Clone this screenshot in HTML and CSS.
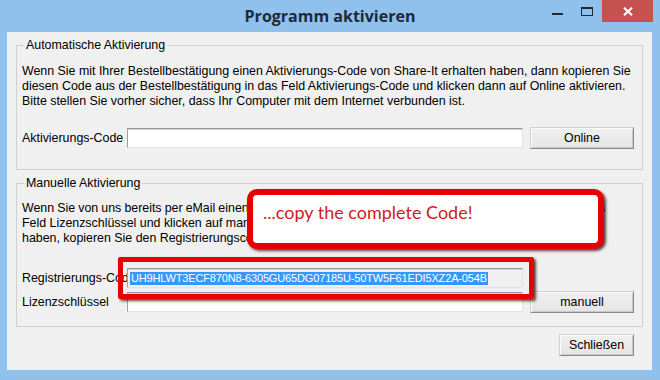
FILE: index.html
```html
<!DOCTYPE html>
<html lang="de">
<head>
<meta charset="utf-8">
<title>Programm aktivieren</title>
<link rel="stylesheet" href="styles.css">
</head>
<body>
<div class="window">
  <div class="titlebar">
    <div class="tb-left"></div>
    <div class="title">Programm aktivieren</div>
    <div class="controls">
      <span class="ctl-min"></span>
      <span class="ctl-max"></span>
      <span class="ctl-close">
        <svg width="10" height="9" viewBox="0 0 10 9"><path d="M1 0.8 L9 8.2 M9 0.8 L1 8.2" stroke="#fff" stroke-width="2.2" fill="none"/></svg>
      </span>
    </div>
  </div>
  <div class="client">
    <fieldset class="group g1">
      <legend>Automatische Aktivierung</legend>
      <p class="info">Wenn Sie mit Ihrer Bestellbestätigung einen Aktivierungs-Code von Share-It erhalten haben, dann kopieren Sie<br>diesen Code aus der Bestellbestätigung in das Feld Aktivierungs-Code und klicken dann auf Online aktivieren.<br>Bitte stellen Sie vorher sicher, dass Ihr Computer mit dem Internet verbunden ist.</p>
      <div class="row">
        <span class="label">Aktivierungs-Code</span>
        <div class="field"></div>
        <div class="btn">Online</div>
      </div>
    </fieldset>
    <fieldset class="group g2">
      <legend>Manuelle Aktivierung</legend>
      <p class="info"><span class="tight">Wenn Sie von uns bereits per eMail einen Lizenzschlüssel erhalten haben, dann kopieren Sie diesen in das</span><br>Feld Lizenzschlüssel und klicken auf manuell aktivieren. Wenn Sie noch keinen Lizenzschlüssel erhalten<br>haben, kopieren Sie den Registrierungscode und senden Sie ihn uns per eMail.</p>
      <div class="row reg">
        <span class="label">Registrierungs-Code</span>
        <div class="field readonly"><span class="sel">UH9HLWT3ECF870N8-6305GU65DG07185U-50TW5F61EDI5XZ2A-054B</span></div>
      </div>
      <div class="row lic">
        <span class="label">Lizenzschlüssel</span>
        <div class="field"></div>
        <div class="btn">manuell</div>
      </div>
    </fieldset>
    <div class="footer">
      <div class="btn btn-close">Schließen</div>
    </div>
    <div class="redbox"></div>
    <div class="callout">...copy the complete Code!</div>
  </div>
</div>
</body>
</html>
```
FILE: styles.css
```css
* { box-sizing: border-box; }
html, body { margin: 0; padding: 0; }
body {
  width: 660px;
  height: 380px;
  overflow: hidden;
  font-family: "Liberation Sans", Arial, sans-serif;
  font-size: 12.4px;
  color: #000;
}
.window {
  width: 660px;
  height: 380px;
  background: #8fc1ec;
  display: flex;
  flex-direction: column;
}
.titlebar {
  height: 32px;
  flex: none;
  display: grid;
  grid-template-columns: 1fr auto 1fr;
}
.title {
  font-family: "Open Sans", "Noto Sans", sans-serif;
  font-weight: 700;
  font-size: 16px;
  line-height: 20px;
  padding-top: 6px;
  color: #1e2a38;
}
.controls {
  justify-self: end;
  display: flex;
  align-items: flex-start;
  margin-right: 7px;
}
.ctl-min {
  width: 11px;
  height: 2px;
  background: #1e2a38;
  margin-top: 13px;
}
.ctl-max {
  width: 12px;
  height: 9px;
  border: 1px solid #1e2a38;
  border-top-width: 2px;
  margin: 7px 0 0 18px;
}
.ctl-close {
  width: 51px;
  height: 22px;
  background: #c75050;
  margin-left: 9px;
  display: flex;
  align-items: center;
  justify-content: center;
}
.ctl-close svg { display: block; }
.client {
  flex: 1;
  margin: 0 8px 10px 7px;
  background: #f0f0f0;
  padding: 6px 9px 0;
  position: relative;
}
.group {
  margin: 0;
  min-width: 0;
  border: 1px solid #d0d0d0;
  padding: 0 8px 20px 5px;
}
.group legend {
  padding: 0 2px;
  margin-left: 2px;
  line-height: 15px;
}
.g2 {
  margin-top: 6px;
  padding-bottom: 13px;
}
.info {
  margin: 11px 0 0;
  line-height: 15px;
  white-space: nowrap;
  overflow: hidden;
}
.g2 .info { margin-top: 10px; }
.tight { word-spacing: -0.35px; }
.row {
  display: flex;
  align-items: center;
  height: 22px;
  margin-top: 18px;
}
.g2 .reg { margin-top: 21px; }
.g2 .lic { margin-top: 2px; }
.label {
  width: 105px;
  flex: none;
  white-space: nowrap;
  line-height: 15px;
}
.field {
  width: 396px;
  height: 20px;
  flex: none;
  background: #fff;
  border: 1px solid;
  border-color: #9a9a9a #e3e3e3 #e3e3e3 #a0a0a0;
  box-shadow: inset 0 1px 0 #cfcfcf;
  display: flex;
  align-items: center;
  padding-left: 2px;
}
.field.readonly { background: #f0f0f0; }
.sel {
  display: inline-block;
  background: #3399ff;
  color: #fff;
  font-size: 11px;
  letter-spacing: -0.15px;
  line-height: 13px;
  height: 13px;
  padding: 0 1px;
  white-space: nowrap;
}
.btn {
  width: 104px;
  height: 22px;
  flex: none;
  margin-left: 7px;
  border: 1px solid;
  border-color: #d0d0d0 #8a8a8a #8a8a8a #d0d0d0;
  background: linear-gradient(#f0f0f0, #e4e4e4);
  box-shadow: inset 1px 1px 0 #fafafa, inset -1px -1px 0 #c9c9c9;
  display: flex;
  align-items: center;
  justify-content: center;
  line-height: 15px;
}
.footer {
  display: flex;
  justify-content: flex-end;
  margin-top: 7px;
  padding-right: 9px;
}
.btn-close { width: 75px; margin-left: 0; }
.redbox {
  position: absolute;
  left: 111px;
  top: 225px;
  width: 416px;
  height: 42px;
  border: 5px solid #e80000;
  border-radius: 2px;
  box-shadow: 2px 2px 3px rgba(40, 0, 0, 0.75);
}
.callout {
  position: absolute;
  left: 240px;
  top: 157px;
  width: 357px;
  height: 60px;
  border: 6px solid #e80000;
  border-radius: 10px;
  background: #fff;
  box-shadow: 2px 2px 3px rgba(40, 0, 0, 0.75);
  font-family: Lato, "Open Sans", sans-serif;
  font-size: 18px;
  line-height: 22px;
  color: #cf2020;
  padding: 6px 0 0 10px;
  white-space: nowrap;
}
```
